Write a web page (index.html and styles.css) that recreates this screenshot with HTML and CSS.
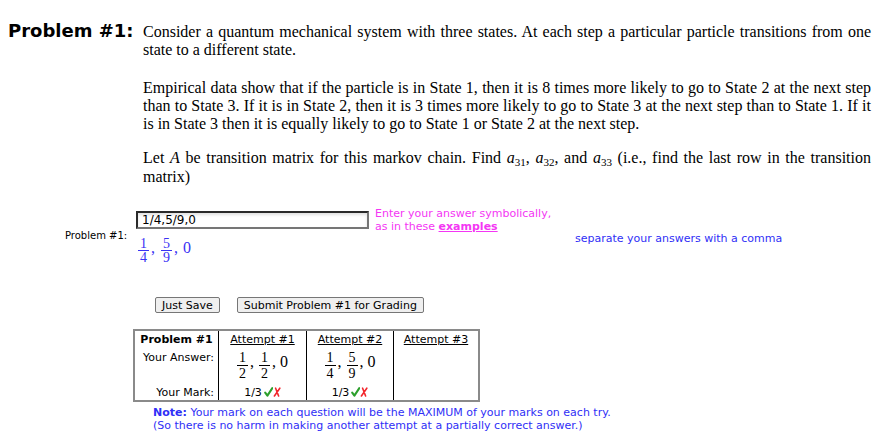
FILE: index.html
```html
<!DOCTYPE html>
<html>
<head>
<meta charset="utf-8">
<link rel="stylesheet" href="styles.css">
</head>
<body>
<div class="page">
  <div class="problem">
    <h1 class="problem-title">Problem #1:</h1>
    <div class="problem-text">
      <p class="p1">Consider a quantum mechanical system with three states. At each step a particular particle transitions from one state to a different state.</p>
      <p class="p2">Empirical data show that if the particle is in State 1, then it is 8 times more likely to go to State 2 at the next step than to State 3. If it is in State 2, then it is 3 times more likely to go to State 3 at the next step than to State 1. If it is in State 3 then it is equally likely to go to State 1 or State 2 at the next step.</p>
      <p class="p3">Let <i>A</i> be transition matrix for this markov chain. Find <i>a</i><span class="sub">31</span>, <i>a</i><span class="sub">32</span>, and <i>a</i><span class="sub">33</span> <span>(i.e., find the last row in the transition</span> <span>matrix)</span></p>
    </div>
  </div>

  <div class="answer-row">
    <div class="ans-label">Problem #1:</div>
    <div class="ans-main">
      <div class="ans-entry">
        <input class="ans-input" type="text" value="1/4,5/9,0">
        <div class="hint">Enter your answer symbolically,<br>as in these <a class="hint-link" href="#">examples</a></div>
      </div>
      <div class="preview"><span class="frac"><span class="num">1</span><span class="den">4</span></span><span class="comma">,</span><span class="frac"><span class="num">5</span><span class="den">9</span></span><span class="comma last">,</span><span class="zero">0</span></div>
    </div>
    <div class="sep-note">separate your answers with a comma</div>
  </div>

  <div class="buttons">
    <button class="btn" type="button">Just Save</button>
    <button class="btn" type="button">Submit Problem #1 for Grading</button>
  </div>

  <table class="attempts">
    <colgroup>
      <col class="w0"><col class="w1"><col class="w2"><col class="w3">
    </colgroup>
    <tr class="r-head">
      <th class="c-first c-center">Problem #1</th>
      <th class="att">Attempt #1</th>
      <th class="att">Attempt #2</th>
      <th class="att">Attempt #3</th>
    </tr>
    <tr class="r-ans">
      <td class="c-first">Your Answer:</td>
      <td class="c-mid"><span class="tmath"><span class="frac"><span class="num">1</span><span class="den">2</span></span><span class="comma">,</span><span class="frac"><span class="num">1</span><span class="den">2</span></span><span class="comma last">,</span><span class="zero">0</span></span></td>
      <td class="c-mid"><span class="tmath"><span class="frac"><span class="num">1</span><span class="den">4</span></span><span class="comma">,</span><span class="frac"><span class="num">5</span><span class="den">9</span></span><span class="comma last">,</span><span class="zero">0</span></span></td>
      <td class="c-mid"></td>
    </tr>
    <tr class="r-mark">
      <td class="c-first">Your Mark:</td>
      <td class="c-mid">1/3<svg class="mk mk-first" width="9" height="10" viewBox="0 0 9 10"><path d="M1.2 5.6 L3.4 8.6 L8.2 1.2" fill="none" stroke="#2c9f2c" stroke-width="2.1" stroke-linecap="round" stroke-linejoin="round"/></svg><svg class="mk" width="8" height="10" viewBox="0 0 8 10"><path d="M2.6 1.2 L5.6 9 M6.8 1.2 L1.4 9" fill="none" stroke="#f2262c" stroke-width="1.6" stroke-linecap="round"/></svg></td>
      <td class="c-mid">1/3<svg class="mk mk-first" width="9" height="10" viewBox="0 0 9 10"><path d="M1.2 5.6 L3.4 8.6 L8.2 1.2" fill="none" stroke="#2c9f2c" stroke-width="2.1" stroke-linecap="round" stroke-linejoin="round"/></svg><svg class="mk" width="8" height="10" viewBox="0 0 8 10"><path d="M2.6 1.2 L5.6 9 M6.8 1.2 L1.4 9" fill="none" stroke="#f2262c" stroke-width="1.6" stroke-linecap="round"/></svg></td>
      <td class="c-mid"></td>
    </tr>
  </table>

  <div class="note"><b>Note:</b> Your mark on each question will be the MAXIMUM of your marks on each try.<br>(So there is no harm in making another attempt at a partially correct answer.)</div>
</div>
</body>
</html>
```

FILE: styles.css
```css
* { box-sizing: border-box; }

html, body {
  margin: 0;
  background: #ffffff;
}

body {
  color: #000;
  font-family: "DejaVu Sans", Verdana, sans-serif;
  font-size: 11px;
  line-height: 13px;
}

.page {
  padding: 20px 7px 0 8px;
}

/* ---------- problem statement ---------- */
.problem {
  display: flex;
  align-items: baseline;
}

.problem-title {
  flex: 0 0 135px;
  margin: 0;
  font-family: "DejaVu Sans", Verdana, sans-serif;
  font-weight: bold;
  font-size: 18px;
  line-height: 21px;
}

.problem-text {
  flex: 1 1 auto;
  font-family: "Liberation Serif", "Times New Roman", serif;
  font-size: 16px;
  line-height: 17.7px;
  text-align: justify;
}

.problem-text p {
  margin: 0;
}

.problem-text .p1 { margin-bottom: 21px; }
.problem-text .p2 { margin-bottom: 16px; }

.sub {
  font-size: 11px;
  line-height: 11px;
  vertical-align: -3px;
}

/* ---------- answer entry ---------- */
.answer-row {
  display: flex;
  align-items: center;
  margin-top: 22px;
  padding-left: 57px;
}

.ans-label {
  flex: 0 0 71px;
  font-size: 10px;
  line-height: 12px;
}

.ans-main {
  flex: 0 0 439px;
  display: flex;
  flex-direction: column;
}

.ans-entry {
  display: flex;
  align-items: center;
}

.ans-input {
  width: 233px;
  height: 18px;
  margin: 0 6px 0 0;
  padding: 0 4px;
  border-style: solid;
  border-width: 2px;
  border-color: #2a2a2a #767676 #767676 #2a2a2a;
  box-shadow: inset 0 2px 3px rgba(0, 0, 0, 0.12);
  font-family: "DejaVu Sans", Verdana, sans-serif;
  font-size: 12px;
  color: #000;
  background: #fff;
}

.hint {
  color: #f436f4;
  font-size: 11px;
  line-height: 13px;
}

.hint-link {
  color: #f436f4;
  font-weight: bold;
  text-decoration: underline;
}

.preview {
  margin-top: 4px;
  padding-left: 2px;
  color: #3a32f4;
  font-family: "Liberation Serif", "Times New Roman", serif;
  font-size: 16px;
  line-height: 15px;
}

.frac {
  display: inline-flex;
  flex-direction: column;
  align-items: stretch;
  text-align: center;
  vertical-align: 5px;
}

.preview .num,
.preview .den {
  font-size: 14px;
  line-height: 13px;
  padding: 0 2px;
}

.num {
  padding-bottom: 1px;
}

.den {
  border-top: 1px solid currentColor;
  padding-top: 1px;
}

.comma {
  margin: 0 6px 0 2px;
}

.comma.last {
  margin-right: 5px;
}

.sep-note {
  margin-top: 5px;
  color: #2f2ff6;
  font-size: 11px;
  line-height: 13px;
}

/* ---------- buttons ---------- */
.buttons {
  display: flex;
  gap: 17px;
  margin-top: 33px;
  padding-left: 147px;
}

.btn {
  height: 16px;
  margin: 0;
  padding: 0 6px;
  border: 1px solid #767676;
  border-radius: 2px;
  background: #efefef;
  color: #000;
  font-family: "DejaVu Sans", Verdana, sans-serif;
  font-size: 11px;
  line-height: 13px;
}

/* ---------- attempts table ---------- */
.attempts {
  margin: 16px 0 0 125px;
  width: 347px;
  table-layout: fixed;
  border-collapse: separate;
  border-spacing: 0;
  border: 2px solid #8a8a8a;
}

.w0 { width: 83px; }
.w1 { width: 88px; }
.w2 { width: 87px; }
.w3 { width: 85px; }

.attempts th,
.attempts td {
  padding: 0 4px;
  font-size: 11px;
  line-height: 13px;
  vertical-align: top;
  text-align: center;
}

.attempts .c-first {
  text-align: right;
}

.attempts .c-first.c-center {
  text-align: center;
  font-weight: bold;
}

.attempts .att,
.attempts .c-mid {
  border-left: 1px solid #000;
}

.att {
  font-weight: normal;
  text-decoration: underline;
}

.r-head th { padding-top: 2px; padding-bottom: 2px; }
.r-ans td { padding-top: 3px; padding-bottom: 3px; }
.r-mark td { padding-top: 3px; padding-bottom: 1px; }

.tmath {
  font-family: "Liberation Serif", "Times New Roman", serif;
  font-size: 16px;
  line-height: 15px;
}

.tmath .num,
.tmath .den {
  font-size: 14px;
  line-height: 13px;
  padding-left: 2px;
  padding-right: 2px;
}

.tmath .comma { margin: 0 5px 0 2px; }
.tmath .comma.last { margin-right: 4px; }

.mk {
  vertical-align: -1px;
}

.mk-first {
  margin-left: 2px;
}

/* ---------- note ---------- */
.note {
  margin: 4px 0 0 145px;
  color: #2f2ff6;
  font-size: 11px;
  line-height: 13px;
}
```
